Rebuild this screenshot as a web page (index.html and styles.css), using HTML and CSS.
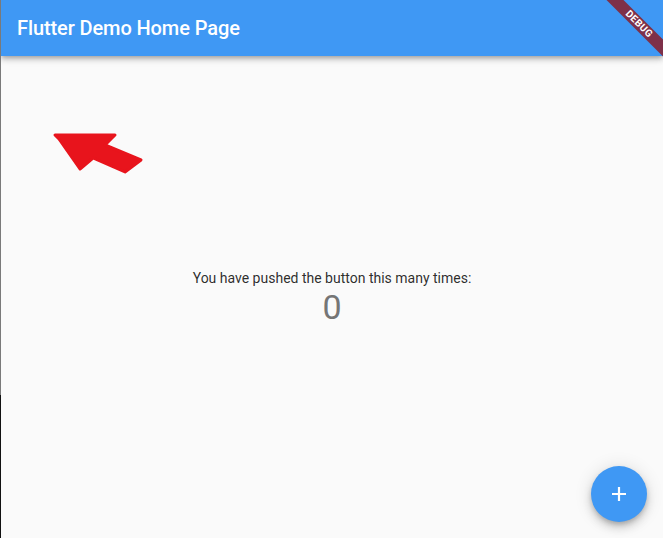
FILE: index.html
```html
<!DOCTYPE html>
<html>
<head>
<meta charset="utf-8">
<link rel="stylesheet" href="styles.css">
</head>
<body>
<div class="app">
  <div class="edge"></div>
  <div class="screen">
    <header class="appbar">
      <h1 class="title">Flutter Demo Home Page</h1>
    </header>
    <main class="body">
      <div class="counter">
        <p class="label">You have pushed the button this many times:</p>
        <p class="count">0</p>
      </div>
    </main>
    <svg class="arrow" width="100" height="50" viewBox="50 130 100 50" xmlns="http://www.w3.org/2000/svg">
      <polygon points="55,135 115,135 105,145 141,160 125,172 93,158 80,169 59,139" fill="#e8141c" stroke="#e8141c" stroke-width="3" stroke-linejoin="round"/>
    </svg>
    <button class="fab" aria-label="Increment">
      <svg width="20" height="20" viewBox="0 0 20 20"><path d="M10 3v14M3 10h14" stroke="#fff" stroke-width="2.2"/></svg>
    </button>
    <div class="banner"><span>DEBUG</span></div>
  </div>
</div>
</body>
</html>
```
FILE: styles.css
```css
html, body {
  margin: 0;
  padding: 0;
  width: 663px;
  height: 538px;
  overflow: hidden;
  background: #fafafa;
  font-family: Roboto, "Liberation Sans", sans-serif;
}
.app {
  display: flex;
  width: 663px;
  height: 538px;
}
.edge {
  width: 1px;
  flex: none;
  background: linear-gradient(to bottom, #7a7a7a 0, #7a7a7a 395px, #111 395px, #111 100%);
}
.screen {
  position: relative;
  flex: 1;
  display: flex;
  flex-direction: column;
  overflow: hidden;
}
.appbar {
  height: 56px;
  flex: none;
  background: #3f98f4;
  display: flex;
  align-items: center;
  padding-left: 16px;
  box-shadow: 0 2px 4px -1px rgba(0,0,0,.2), 0 4px 5px 0 rgba(0,0,0,.14), 0 1px 10px 0 rgba(0,0,0,.12);
  z-index: 1;
}
.title {
  margin: 0;
  color: #fff;
  font-size: 20px;
  font-weight: 500;
  letter-spacing: -0.1px;
}
.body {
  flex: 1;
  display: flex;
  align-items: center;
  justify-content: center;
}
.counter {
  display: flex;
  flex-direction: column;
  align-items: center;
  margin-top: 0;
}
.label {
  margin: 0;
  font-size: 14px;
  line-height: 20px;
  color: rgba(0,0,0,.84);
}
.count {
  margin: 0;
  font-size: 34px;
  line-height: 38px;
  color: #757575;
}
.arrow {
  position: absolute;
  left: 49px;
  top: 130px;
}
.fab {
  position: absolute;
  right: 16px;
  bottom: 16px;
  width: 56px;
  height: 56px;
  border-radius: 50%;
  border: none;
  padding: 0;
  background: #3f98f4;
  display: flex;
  align-items: center;
  justify-content: center;
  box-shadow: 0 3px 5px -1px rgba(0,0,0,.2), 0 6px 10px 0 rgba(0,0,0,.14), 0 1px 18px 0 rgba(0,0,0,.12);
}
.banner {
  position: absolute;
  left: 588px;
  top: 18px;
  width: 100px;
  height: 12px;
  background: #7e3049;
  transform: rotate(45deg);
  display: flex;
  align-items: center;
  justify-content: center;
  z-index: 2;
}
.banner span {
  color: #fff;
  font-size: 10px;
  font-weight: 700;
  line-height: 12px;
  letter-spacing: 0.3px;
}
```
